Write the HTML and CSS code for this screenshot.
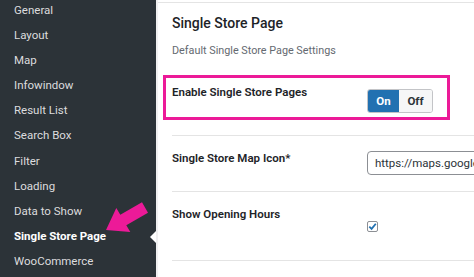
FILE: index.html
```html
<!DOCTYPE html>
<html lang="en">
<head>
  <meta charset="UTF-8">
  <meta name="viewport" content="width=device-width, initial-scale=1.0">
  <title>Single Store Page Settings</title>
  <link rel="stylesheet" href="styles.css">
</head>
<body>
  <div class="sidebar">
    <ul class="menu">
      <li>General</li>
      <li>Layout</li>
      <li>Map</li>
      <li>Infowindow</li>
      <li>Result List</li>
      <li>Search Box</li>
      <li>Filter</li>
      <li>Loading</li>
      <li>Data to Show</li>
      <li class="current">Single Store Page</li>
      <li>WooCommerce</li>
    </ul>
    <!-- annotation arrow pointing at the active menu item -->
    <svg class="arrow" width="60" height="50" viewBox="100 195 60 50">
      <polygon points="106,230 116.3,207.9 120.3,214.8 142,202.3 148,212.7 126.3,225.2 130.3,232.1" fill="#ec1a98"/>
    </svg>
  </div>

  <div class="main">
    <div class="top-rule"></div>
    <h2>Single Store Page</h2>
    <p class="desc">Default Single Store Page Settings</p>

    <div class="highlight">
      <div class="label">Enable Single Store Pages</div>
      <div class="toggle">
        <span class="on">On</span>
        <span class="off">Off</span>
      </div>
    </div>

    <div class="row">
      <div class="label">Single Store Map Icon*</div>
      <div class="field">
        <input type="text" class="text-input" value="https://maps.google.com/mapfiles/ms/icons/red-dot.png">
      </div>
    </div>

    <div class="row last">
      <div class="label">Show Opening Hours</div>
      <div class="field">
        <span class="checkbox">
          <svg width="9" height="9" viewBox="0 0 9 9">
            <path d="M1.3 4.6 L3.6 6.9 L7.8 1.8" fill="none" stroke="#2271b1" stroke-width="1.8"/>
          </svg>
        </span>
      </div>
    </div>
  </div>
</body>
</html>
```

FILE: styles.css
```css
body {
  margin: 0;
  width: 474px;
  height: 277px;
  overflow: hidden;
  display: flex;
  font-family: Roboto, "Liberation Sans", sans-serif;
  background: #fff;
}
.sidebar {
  position: relative;
  width: 156px;
  flex-shrink: 0;
  background: #2c3338;
}
.menu {
  list-style: none;
  margin: -2px 0 0 0;
  padding: 0;
}
.menu li {
  position: relative;
  height: 25.1px;
  line-height: 25px;
  padding-left: 14px;
  font-size: 11.5px;
  color: #dcdcde;
}
.menu li.current {
  color: #fff;
  font-weight: 700;
}
.menu li.current::after {
  content: "";
  position: absolute;
  right: 0;
  top: 7px;
  border: 6px solid transparent;
  border-right-color: #fff;
}
.arrow {
  position: absolute;
  left: 100px;
  top: 195px;
}
.main {
  flex: 1;
  padding-left: 14px;
  overflow: hidden;
  border-left: 2px solid #f0f0f1;
}
.top-rule {
  height: 1px;
  margin: 2px 0 0 -16px;
  background: #e4e4e4;
}
h2 {
  margin: 10px 0 0 0;
  font-size: 14px;
  line-height: 20px;
  font-weight: 500;
  color: #1d2327;
}
.desc {
  margin: 10px 0 0 0;
  font-size: 10.8px;
  line-height: 16px;
  color: #646970;
}
.label {
  font-size: 11.5px;
  line-height: 16px;
  font-weight: 600;
  color: #1d2327;
}
.highlight {
  display: flex;
  align-items: flex-start;
  box-sizing: border-box;
  width: 287px;
  height: 45px;
  margin: 16px 0 15px -9px;
  padding: 6px 0 0 6px;
  border: 3px solid #ec1a98;
}
.highlight .label {
  width: 195px;
  flex-shrink: 0;
}
.toggle {
  display: flex;
  margin-top: 5px;
  height: 24px;
  box-sizing: border-box;
  border: 1px solid #c3c4c7;
  border-radius: 3px;
  overflow: hidden;
  font-size: 11.5px;
  font-weight: 700;
  line-height: 22px;
}
.toggle .on {
  width: 31px;
  text-align: center;
  background: #2271b1;
  color: #fff;
}
.toggle .off {
  width: 33px;
  text-align: center;
  background: #f6f7f7;
  color: #2c3338;
}
.row {
  display: grid;
  grid-template-columns: 195px 1fr;
  border-top: 1px solid #e4e4e4;
  padding: 14px 0 16px 0;
}
.row.last {
  border-bottom: 1px solid #e4e4e4;
  padding-bottom: 28px;
}
.field {
  padding-top: 1px;
}
.text-input {
  display: block;
  width: 220px;
  height: 24px;
  box-sizing: border-box;
  padding: 0 7px;
  border: 1px solid #8c8f94;
  border-radius: 4px;
  font-family: Roboto, "Liberation Sans", sans-serif;
  font-size: 11.5px;
  color: #2c3338;
  background: #fff;
}
.checkbox {
  display: flex;
  align-items: center;
  justify-content: center;
  width: 11px;
  height: 11px;
  box-sizing: border-box;
  margin-top: 14px;
  border: 1px solid #8c8f94;
  border-radius: 2px;
  background: #fff;
}
```
